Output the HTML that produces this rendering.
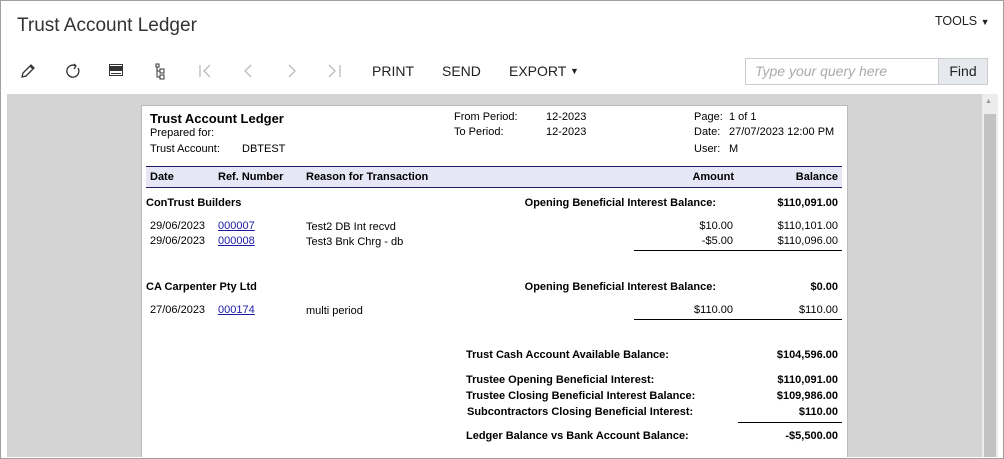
<!DOCTYPE html>
<html><head><style>
body{margin:0;width:1004px;height:459px;overflow:hidden;font-family:"Liberation Sans",Arial,sans-serif;background:#fff;position:relative}
.a{position:absolute;white-space:nowrap}
.r{font-size:11px;color:#000;line-height:13px}
.b{font-weight:bold}
.rt{text-align:right}
.tb{font-size:14px;color:#222;line-height:16px}
a{color:#1a1aa6;text-decoration:underline}
</style></head><body>
<div class="a" style="left:0;top:0;width:1002px;height:457px;border:1px solid #a0a0a0"></div>
<div class="a" style="left:17px;top:15px;font-size:19px;color:#333">Trust Account Ledger</div>
<div class="a" style="left:935px;top:14px;font-size:12.5px;color:#222">TOOLS <span style="font-size:9px">▼</span></div>

<svg class="a" style="left:18px;top:61px" width="340" height="20" viewBox="0 0 340 20" fill="none" stroke="#333" stroke-width="1.3">
<path d="M4 16 L5 12 L13 4 L16 7 L8 15 Z M12 5 L15 8"/>
<path d="M58 5 A6 6 0 1 0 60 7 M56 3 L58 5 L56 8"/>
<rect x="91.5" y="3.5" width="13" height="11" stroke-width="1"/><rect x="92" y="5" width="12" height="5" fill="#333" stroke="none"/><path d="M93 12.5 H103" stroke-width="1"/>
<path d="M138 3 H141 V6 H138 Z M139 6 V16 H142 M139 10 H142 M142 8 H146 V12 H142 Z M142 14 H146 V18 H142 Z" stroke-width="1"/>
<g stroke="#bbb"><path d="M182 4 V16 M192 4 L186 10 L192 16"/><path d="M233 4 L227 10 L233 16"/><path d="M271 4 L277 10 L271 16"/><path d="M311 4 L317 10 L311 16 M322 4 V16"/></g>
</svg>
<div class="a tb" style="left:372px;top:63px">PRINT</div>
<div class="a tb" style="left:442px;top:63px">SEND</div>
<div class="a tb" style="left:509px;top:63px">EXPORT <span style="font-size:9px;position:relative;top:-2px">▼</span></div>
<div class="a" style="left:745px;top:58px;width:192px;height:25px;border:1px solid #ccc;border-right:none"></div>
<div class="a" style="left:755px;top:63px;font-size:14px;font-style:italic;color:#aaa">Type your query here</div>
<div class="a" style="left:938px;top:58px;width:48px;height:25px;border:1px solid #ccc;background:#e6e9ed;font-size:14px;color:#222;line-height:25px;text-align:center">Find</div>

<div class="a" style="left:7px;top:94px;width:991px;height:363px;background:#d4d4d4"></div>
<div class="a" style="left:982px;top:94px;width:16px;height:363px;background:#ececec"></div>
<div class="a" style="left:984px;top:114px;width:12px;height:343px;background:#c2c2c2"></div>
<div class="a" style="left:985px;top:98px;font-size:7px;color:#999">▲</div>
<div class="a" style="left:141px;top:105px;width:707px;height:352px;background:#fff;border:1px solid #bbb;border-bottom:none;box-sizing:border-box"></div>

<div class="a r b" style="left:150px;top:111px;font-size:13px;line-height:15px">Trust Account Ledger</div>
<div class="a r" style="left:150px;top:127px">Prepared for:</div>
<div class="a r" style="left:150px;top:143px">Trust Account:</div>
<div class="a r" style="left:242px;top:143px">DBTEST</div>
<div class="a r" style="left:454px;top:111px">From Period:</div>
<div class="a r" style="left:546px;top:111px">12-2023</div>
<div class="a r" style="left:454px;top:126px">To Period:</div>
<div class="a r" style="left:546px;top:126px">12-2023</div>
<div class="a r" style="left:694px;top:111px">Page:</div>
<div class="a r" style="left:729px;top:111px">1 of 1</div>
<div class="a r" style="left:694px;top:126px">Date:</div>
<div class="a r" style="left:729px;top:126px">27/07/2023 12:00 PM</div>
<div class="a r" style="left:694px;top:143px">User:</div>
<div class="a r" style="left:729px;top:143px">M</div>

<div class="a" style="left:146px;top:166px;width:696px;height:20px;background:#e6e6f6;border-top:1px solid #1c1c5e;border-bottom:1px solid #1c1c5e"></div>
<div class="a r b" style="left:150px;top:171px">Date</div>
<div class="a r b" style="left:218px;top:171px">Ref. Number</div>
<div class="a r b" style="left:306px;top:171px">Reason for Transaction</div>
<div class="a r b rt" style="left:634px;width:100px;top:171px">Amount</div>
<div class="a r b rt" style="left:738px;width:100px;top:171px">Balance</div>

<div class="a r b" style="left:146px;top:197px">ConTrust Builders</div>
<div class="a r b rt" style="left:450px;width:266px;top:197px">Opening Beneficial Interest Balance:</div>
<div class="a r b rt" style="left:738px;width:100px;top:197px">$110,091.00</div>
<div class="a r" style="left:150px;top:220px">29/06/2023</div>
<div class="a r" style="left:218px;top:220px"><a>000007</a></div>
<div class="a r" style="left:306px;top:221px">Test2 DB Int recvd</div>
<div class="a r rt" style="left:634px;width:99px;top:220px">$10.00</div>
<div class="a r rt" style="left:738px;width:100px;top:220px">$110,101.00</div>
<div class="a r" style="left:150px;top:235px">29/06/2023</div>
<div class="a r" style="left:218px;top:235px"><a>000008</a></div>
<div class="a r" style="left:306px;top:236px">Test3 Bnk Chrg - db</div>
<div class="a r rt" style="left:634px;width:99px;top:235px">-$5.00</div>
<div class="a r rt" style="left:738px;width:100px;top:235px">$110,096.00</div>
<div class="a" style="left:634px;top:250px;width:208px;height:1px;background:#000"></div>

<div class="a r b" style="left:146px;top:281px">CA Carpenter Pty Ltd</div>
<div class="a r b rt" style="left:450px;width:266px;top:281px">Opening Beneficial Interest Balance:</div>
<div class="a r b rt" style="left:738px;width:100px;top:281px">$0.00</div>
<div class="a r" style="left:150px;top:304px">27/06/2023</div>
<div class="a r" style="left:218px;top:304px"><a>000174</a></div>
<div class="a r" style="left:306px;top:305px">multi period</div>
<div class="a r rt" style="left:634px;width:99px;top:304px">$110.00</div>
<div class="a r rt" style="left:738px;width:100px;top:304px">$110.00</div>
<div class="a" style="left:634px;top:319px;width:208px;height:1px;background:#000"></div>

<div class="a r b" style="left:466px;top:349px">Trust Cash Account Available Balance:</div>
<div class="a r b rt" style="left:738px;width:100px;top:349px">$104,596.00</div>
<div class="a r b" style="left:466px;top:374px">Trustee Opening Beneficial Interest:</div>
<div class="a r b rt" style="left:738px;width:100px;top:374px">$110,091.00</div>
<div class="a r b" style="left:466px;top:390px">Trustee Closing Beneficial Interest Balance:</div>
<div class="a r b rt" style="left:738px;width:100px;top:390px">$109,986.00</div>
<div class="a r b" style="left:467px;top:406px">Subcontractors Closing Beneficial Interest:</div>
<div class="a r b rt" style="left:738px;width:100px;top:406px">$110.00</div>
<div class="a" style="left:738px;top:422px;width:104px;height:1px;background:#000"></div>
<div class="a r b" style="left:466px;top:430px">Ledger Balance vs Bank Account Balance:</div>
<div class="a r b rt" style="left:738px;width:100px;top:430px">-$5,500.00</div>
</body></html>
